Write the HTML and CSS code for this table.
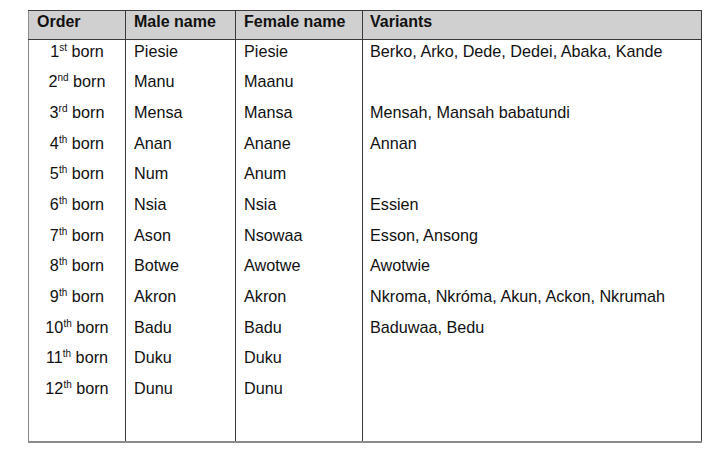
FILE: index.html
```html
<!DOCTYPE html>
<html>
<head>
<meta charset="utf-8">
<link rel="stylesheet" href="styles.css">
</head>
<body>
<table class="names">
  <colgroup>
    <col class="c-order"><col class="c-male"><col class="c-female"><col class="c-var">
  </colgroup>
  <thead>
    <tr class="head">
      <th>Order</th><th>Male name</th><th>Female name</th><th class="var">Variants</th>
    </tr>
  </thead>
  <tbody>
    <tr><td class="ord">1<sup>st</sup> born</td><td>Piesie</td><td>Piesie</td><td class="var">Berko, Arko, Dede, Dedei, Abaka, Kande</td></tr>
    <tr><td class="ord">2<sup>nd</sup> born</td><td>Manu</td><td>Maanu</td><td class="var"></td></tr>
    <tr><td class="ord">3<sup>rd</sup> born</td><td>Mensa</td><td>Mansa</td><td class="var">Mensah, Mansah babatundi</td></tr>
    <tr><td class="ord">4<sup>th</sup> born</td><td>Anan</td><td>Anane</td><td class="var">Annan</td></tr>
    <tr><td class="ord">5<sup>th</sup> born</td><td>Num</td><td>Anum</td><td class="var"></td></tr>
    <tr><td class="ord">6<sup>th</sup> born</td><td>Nsia</td><td>Nsia</td><td class="var">Essien</td></tr>
    <tr><td class="ord">7<sup>th</sup> born</td><td>Ason</td><td>Nsowaa</td><td class="var">Esson, Ansong</td></tr>
    <tr><td class="ord">8<sup>th</sup> born</td><td>Botwe</td><td>Awotwe</td><td class="var">Awotwie</td></tr>
    <tr><td class="ord">9<sup>th</sup> born</td><td>Akron</td><td>Akron</td><td class="var">Nkroma, Nkróma, Akun, Ackon, Nkrumah</td></tr>
    <tr><td class="ord">10<sup>th</sup> born</td><td>Badu</td><td>Badu</td><td class="var">Baduwaa, Bedu</td></tr>
    <tr><td class="ord">11<sup>th</sup> born</td><td>Duku</td><td>Duku</td><td class="var"></td></tr>
    <tr><td class="ord">12<sup>th</sup> born</td><td>Dunu</td><td>Dunu</td><td class="var"></td></tr>
    <tr class="spacer"><td></td><td></td><td></td><td></td></tr>
  </tbody>
</table>
</body>
</html>
```
FILE: styles.css
```css
html, body {
  margin: 0;
  padding: 0;
  background: #ffffff;
}
body {
  padding: 10px 0 0 28px;
  font-family: "Liberation Sans", Arial, sans-serif;
  font-size: 16px;
  color: #111111;
}
.names {
  border-collapse: collapse;
  table-layout: fixed;
  width: 673px;
  border-top: 1px solid #3a3a3a;
  border-right: 1px solid #3a3a3a;
  border-left: 1px solid #8a8a8a;
  border-bottom: 2px solid #8a8a8a;
}
.c-order { width: 97px; }
.c-male { width: 110px; }
.c-female { width: 127px; }
.c-var { width: 339px; }
.names th, .names td {
  border-left: 1px solid #3a3a3a;
  padding: 0 0 0 8px;
  vertical-align: top;
  text-align: left;
  line-height: 17px;
  white-space: nowrap;
}
.names th:first-child, .names td:first-child {
  border-left: none;
}
.head th {
  background: #d0d0d0;
  font-weight: bold;
  height: 29px;
  box-sizing: border-box;
  padding-top: 2px;
  border-bottom: 1px solid #3a3a3a;
}
.names tbody td {
  height: 30.7px;
  box-sizing: border-box;
  padding-top: 3px;
  font-size: 16.2px;
}
.names th.var, .names td.var {
  padding-left: 7px;
}
.names td.ord {
  text-align: center;
  padding-left: 0;
}
.names sup {
  font-size: 10px;
  line-height: 0;
  vertical-align: 6px;
}
.names tbody tr.spacer td {
  height: 34px;
}
```
